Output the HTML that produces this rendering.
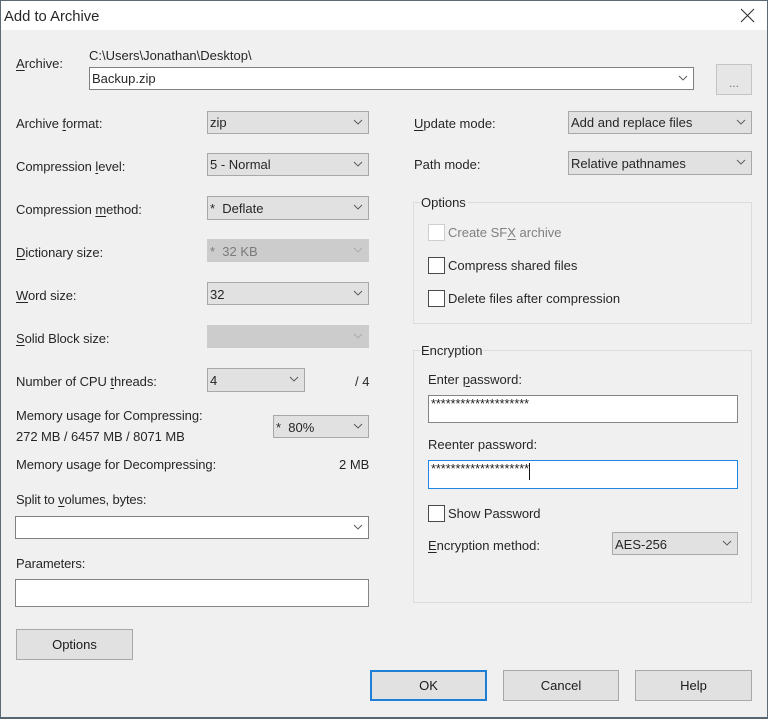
<!DOCTYPE html>
<html><head><meta charset="utf-8"><title>Add to Archive</title>
<style>
html,body{margin:0;padding:0;width:768px;height:719px;overflow:hidden;background:#f0f0f0}
body{font-family:"Liberation Sans",sans-serif;font-size:13px;color:#1a1a1a;position:relative;filter:blur(.3px)}
.t{position:absolute;white-space:nowrap;line-height:16px;opacity:.95}
.n{letter-spacing:-.07px}
.c{position:absolute;box-sizing:border-box;background:#e1e1e1;border:1px solid #a8a8a8}
.c span{position:absolute;left:2px;top:3px;line-height:16px;white-space:pre;opacity:.95}
.c svg{position:absolute;right:4px;top:6px;width:12px;height:8px}
.d{background:#cccccc;border-color:#cccccc;color:#777}
.w{background:#fff;border-color:#808080}
.e{position:absolute;box-sizing:border-box;background:#fff;border:1px solid #858585}
.g{position:absolute;box-sizing:border-box;border:1px solid #dcdcdc}
.l{position:absolute;background:#f0f0f0;padding:0 1px;line-height:16px;white-space:nowrap;opacity:.95}
.k{position:absolute;box-sizing:border-box;width:17px;height:17px;background:#fff;border:1px solid #4a4a4a}
.b{position:absolute;box-sizing:border-box;background:#e1e1e1;border:1px solid #a8a8a8;text-align:center;line-height:30px}
.s{position:absolute;left:2px;top:0;line-height:16px;font-size:12.6px;letter-spacing:0}
u{text-decoration-thickness:1px;text-underline-offset:2px}
</style></head><body>
<div style="position:absolute;left:0;top:0;width:768px;height:30px;background:#fff"></div>
<div style="position:absolute;left:0;top:0;width:768px;height:1px;background:#5b6a74"></div>
<div style="position:absolute;left:0;top:0;width:1px;height:719px;background:#5b6a74"></div>
<div style="position:absolute;right:0;top:0;width:1px;height:719px;background:#5b6a74"></div>
<div style="position:absolute;left:0;top:717px;width:768px;height:2px;background:#56656f"></div>
<div class="t" style="left:4px;top:9px;font-size:14.8px">Add to Archive</div>
<svg style="position:absolute;left:740px;top:8px" width="15" height="15" viewBox="0 0 15 15"><path d="M1 1L14 14M14 1L1 14" stroke="#333" stroke-width="1.1" fill="none"/></svg>

<div class="t" style="left:16px;top:56px"><u>A</u>rchive:</div>
<div class="t" style="left:89px;top:48px">C:\Users\Jonathan\Desktop\</div>
<div class="c w" style="left:89px;top:67px;width:605px;height:23px"><span style="top:3px">Backup.zip</span><svg viewBox="0 0 12 8"><path d="M2 2L6 6L10 2" stroke="#555" stroke-width=".9" fill="none"/></svg></div>
<div class="b" style="left:716px;top:64px;width:36px;height:31px;color:#777;border-color:#c4c4c4;background:#e6e6e6;line-height:36px;font-size:12px">...</div>

<div class="t n" style="left:16px;top:116px">Archive <u>f</u>ormat:</div>
<div class="c" style="left:207px;top:111px;width:162px;height:23px"><span>zip</span><svg viewBox="0 0 12 8"><path d="M2 2L6 6L10 2" stroke="#555" stroke-width=".9" fill="none"/></svg></div>
<div class="t n" style="left:16px;top:159px">Compression <u>l</u>evel:</div>
<div class="c" style="left:207px;top:153px;width:162px;height:23px"><span>5 - Normal</span><svg viewBox="0 0 12 8"><path d="M2 2L6 6L10 2" stroke="#555" stroke-width=".9" fill="none"/></svg></div>
<div class="t n" style="left:16px;top:202px">Compression <u>m</u>ethod:</div>
<div class="c" style="left:207px;top:196px;width:162px;height:24px"><span style="top:4px">*  Deflate</span><svg viewBox="0 0 12 8"><path d="M2 2L6 6L10 2" stroke="#555" stroke-width=".9" fill="none"/></svg></div>
<div class="t n" style="left:16px;top:245px"><u>D</u>ictionary size:</div>
<div class="c d" style="left:207px;top:239px;width:162px;height:23px"><span style="top:4px">*  32 KB</span><svg viewBox="0 0 12 8"><path d="M2 2L6 6L10 2" stroke="#aaa" stroke-width=".9" fill="none"/></svg></div>
<div class="t n" style="left:16px;top:288px"><u>W</u>ord size:</div>
<div class="c" style="left:207px;top:282px;width:162px;height:23px"><span style="top:4px">32</span><svg viewBox="0 0 12 8"><path d="M2 2L6 6L10 2" stroke="#555" stroke-width=".9" fill="none"/></svg></div>
<div class="t n" style="left:16px;top:331px"><u>S</u>olid Block size:</div>
<div class="c d" style="left:207px;top:325px;width:162px;height:23px"><svg viewBox="0 0 12 8"><path d="M2 2L6 6L10 2" stroke="#aaa" stroke-width=".9" fill="none"/></svg></div>
<div class="t n" style="left:16px;top:374px">Number of CPU <u>t</u>hreads:</div>
<div class="c" style="left:207px;top:368px;width:98px;height:24px"><span style="top:4px">4</span><svg viewBox="0 0 12 8"><path d="M2 2L6 6L10 2" stroke="#555" stroke-width=".9" fill="none"/></svg></div>
<div class="t" style="left:355px;top:374px">/ 4</div>
<div class="t n" style="left:16px;top:408px">Memory usage for Compressing:</div>
<div class="t n" style="left:16px;top:429px">272 MB / 6457 MB / 8071 MB</div>
<div class="c" style="left:273px;top:415px;width:96px;height:23px"><span style="top:4px">*  80%</span><svg viewBox="0 0 12 8"><path d="M2 2L6 6L10 2" stroke="#555" stroke-width=".9" fill="none"/></svg></div>
<div class="t n" style="left:16px;top:457px">Memory usage for Decompressing:</div>
<div class="t" style="left:339px;top:457px">2 MB</div>
<div class="t" style="left:16px;top:492px;letter-spacing:-.14px">Split to <u>v</u>olumes, bytes:</div>
<div class="c w" style="left:15px;top:516px;width:354px;height:23px"><svg viewBox="0 0 12 8"><path d="M2 2L6 6L10 2" stroke="#555" stroke-width=".9" fill="none"/></svg></div>
<div class="t" style="left:16px;top:556px;letter-spacing:-.15px">Parameters:</div>
<div class="e" style="left:15px;top:579px;width:354px;height:28px"></div>
<div class="b" style="left:16px;top:629px;width:117px;height:31px">Options</div>

<div class="t" style="left:414px;top:116px"><u>U</u>pdate mode:</div>
<div class="c" style="left:568px;top:111px;width:184px;height:23px"><span>Add and replace files</span><svg viewBox="0 0 12 8"><path d="M2 2L6 6L10 2" stroke="#555" stroke-width=".9" fill="none"/></svg></div>
<div class="t" style="left:414px;top:157px">Path mode:</div>
<div class="c" style="left:568px;top:151px;width:184px;height:24px"><span style="top:4px">Relative pathnames</span><svg viewBox="0 0 12 8"><path d="M2 2L6 6L10 2" stroke="#555" stroke-width=".9" fill="none"/></svg></div>

<div class="g" style="left:413px;top:202px;width:339px;height:122px"></div>
<div class="l" style="left:420px;top:195px">Options</div>
<div class="k" style="left:428px;top:224px;border-color:#cfcfcf"></div>
<div class="t" style="left:448px;top:225px;color:#7a7a7a">Create SF<u>X</u> archive</div>
<div class="k" style="left:428px;top:257px"></div>
<div class="t" style="left:448px;top:258px">Compress shared files</div>
<div class="k" style="left:428px;top:290px"></div>
<div class="t" style="left:448px;top:291px;letter-spacing:.03px">Delete files after compression</div>

<div class="g" style="left:413px;top:350px;width:339px;height:253px"></div>
<div class="l" style="left:420px;top:343px">Encryption</div>
<div class="t" style="left:428px;top:372px">Enter <u>p</u>assword:</div>
<div class="e" style="left:428px;top:395px;width:310px;height:28px"><span class="s">********************</span></div>
<div class="t" style="left:428px;top:437px">Reenter password:</div>
<div class="e" style="left:428px;top:460px;width:310px;height:29px;border-color:#1f86e0"><span class="s">********************</span><div style="position:absolute;left:100px;top:2px;width:1px;height:17px;background:#111"></div></div>
<div class="k" style="left:428px;top:505px"></div>
<div class="t" style="left:448px;top:506px;letter-spacing:-.06px">Show Password</div>
<div class="t" style="left:428px;top:538px"><u>E</u>ncryption method:</div>
<div class="c" style="left:612px;top:532px;width:126px;height:23px"><span style="top:4px">AES-256</span><svg viewBox="0 0 12 8"><path d="M2 2L6 6L10 2" stroke="#555" stroke-width=".9" fill="none"/></svg></div>

<div class="b" style="left:370px;top:670px;width:117px;height:31px;border:2px solid #1f7fd4;line-height:28px">OK</div>
<div class="b" style="left:503px;top:670px;width:116px;height:31px">Cancel</div>
<div class="b" style="left:635px;top:670px;width:117px;height:31px">Help</div>
</body></html>
